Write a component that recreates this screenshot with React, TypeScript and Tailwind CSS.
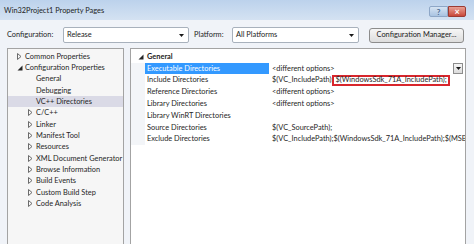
import React from 'react';

const font = { fontFamily: 'Lato, "Liberation Sans", sans-serif' };

type TreeItem = { label: string; level: 0 | 1; arrow: 'closed' | 'open' | 'none'; selected?: boolean };

const treeItems: TreeItem[] = [
  { label: 'Common Properties', level: 0, arrow: 'closed' },
  { label: 'Configuration Properties', level: 0, arrow: 'open' },
  { label: 'General', level: 1, arrow: 'none' },
  { label: 'Debugging', level: 1, arrow: 'none' },
  { label: 'VC++ Directories', level: 1, arrow: 'none', selected: true },
  { label: 'C/C++', level: 1, arrow: 'closed' },
  { label: 'Linker', level: 1, arrow: 'closed' },
  { label: 'Manifest Tool', level: 1, arrow: 'closed' },
  { label: 'Resources', level: 1, arrow: 'closed' },
  { label: 'XML Document Generator', level: 1, arrow: 'closed' },
  { label: 'Browse Information', level: 1, arrow: 'closed' },
  { label: 'Build Events', level: 1, arrow: 'closed' },
  { label: 'Custom Build Step', level: 1, arrow: 'closed' },
  { label: 'Code Analysis', level: 1, arrow: 'closed' },
];

const ClosedArrow = () => (
  <svg width="5" height="7" viewBox="0 0 5 7" className="shrink-0">
    <path d="M0.5 0.5 L4 3.5 L0.5 6.5 Z" fill="none" stroke="#6b6b6b" strokeWidth="1" />
  </svg>
);

const OpenArrow = () => (
  <svg width="6" height="6" viewBox="0 0 6 6" className="shrink-0">
    <path d="M5.5 0.5 L5.5 5.5 L0.5 5.5 Z" fill="#262626" />
  </svg>
);

const DropArrow = () => (
  <svg width="5" height="3" viewBox="0 0 5 3">
    <path d="M0 0 L5 0 L2.5 3 Z" fill="#1a1a1a" />
  </svg>
);

const Select = ({ value, width }: { value: string; width: string }) => (
  <div className={`${width} h-[16px] bg-white border border-[#a8b1bc] rounded-[2px] flex items-center justify-between pl-[3px] pr-[4px]`}>
    <span className="text-[7.4px] text-[#1b1b1b] leading-none">{value}</span>
    <DropArrow />
  </div>
);

type Prop = { name: string; value: string; selected?: boolean; boxed?: boolean };

const props: Prop[] = [
  { name: 'Executable Directories', value: '<different options>', selected: true },
  { name: 'Include Directories', value: '$(VC_IncludePath);', boxed: true },
  { name: 'Reference Directories', value: '<different options>' },
  { name: 'Library Directories', value: '<different options>' },
  { name: 'Library WinRT Directories', value: '' },
  { name: 'Source Directories', value: '$(VC_SourcePath);' },
  { name: 'Exclude Directories', value: '$(VC_IncludePath);$(WindowsSdk_71A_IncludePath);$(MSBuild_ExecutablePath)' },
];

export default function App() {
  return (
    <div className="w-[474px] h-[244px] overflow-hidden bg-[#dfe8f3] flex flex-col" style={font}>
      {/* Title bar */}
      <div className="h-[20px] shrink-0 bg-gradient-to-b from-[#bcd2ec] to-[#d4e2f2] flex items-start justify-between pl-[4px] pr-[8px]">
        <span className="text-[7.4px] text-[#1e1e1e] leading-none mt-[7px]">Win32Project1 Property Pages</span>
        <div className="flex mt-[6px]">
          <div className="w-[19px] h-[11px] rounded-l-[2px] bg-gradient-to-b from-[#d6e4f3] to-[#a9c3e1] border border-[#8ea7c7] flex items-center justify-center">
            <span className="text-[8px] leading-none text-[#4a6a92] font-bold">?</span>
          </div>
          <div className="w-[18px] h-[11px] rounded-r-[2px] bg-gradient-to-b from-[#e8a095] to-[#c8473a] border border-[#9c3b33] flex items-center justify-center">
            <span className="text-[9px] leading-none text-white font-bold">×</span>
          </div>
        </div>
      </div>

      {/* Body */}
      <div className="flex-1 bg-[#f0f3f8] flex flex-col pl-[7px] pr-[8px]">
        {/* Toolbar */}
        <div className="h-[25px] flex items-center pt-[5px]">
          <span className="text-[7.4px] text-[#1e1e1e] w-[56px]">Configuration:</span>
          <Select value="Release" width="w-[126px]" />
          <span className="text-[7.4px] text-[#1e1e1e] ml-[5px] w-[38px]">Platform:</span>
          <Select value="All Platforms" width="w-[127px]" />
          <div className="ml-[10px] w-[95px] h-[15px] rounded-[3px] border border-[#8c8c8c] bg-gradient-to-b from-[#f6f6f6] to-[#dddddd] flex items-center justify-center">
            <span className="text-[7.4px] text-[#1b1b1b] leading-none">Configuration Manager...</span>
          </div>
        </div>

        {/* Panels */}
        <div className="flex mt-[3px] gap-[6px] h-[197px]">
          {/* Tree */}
          <div className="w-[117px] border border-[#a3a3a3] bg-[#f6f6f6] pt-[1.7px] overflow-hidden">
            {treeItems.map((t) => (
              <div
                key={t.label}
                className={`h-[11.33px] flex items-center ${t.level === 0 ? 'pl-[9px]' : 'pl-[20px]'} ${t.selected ? 'bg-[#dadae6]' : ''}`}
              >
                <div className="w-[8px] shrink-0 flex items-center">
                  {t.arrow === 'closed' && <ClosedArrow />}
                  {t.arrow === 'open' && <OpenArrow />}
                </div>
                <span className="text-[7.4px] text-[#262626] leading-none whitespace-nowrap">{t.label}</span>
              </div>
            ))}
          </div>

          {/* Property grid */}
          <div className="flex-1 border border-[#a3a3a3] bg-white flex flex-col overflow-hidden pt-[1.5px]">
            <div className="h-[12px] flex items-center pl-[7px]">
              <OpenArrow />
              <span className="ml-[3px] text-[7.4px] font-bold text-[#1a1a1a] leading-none">General</span>
            </div>
            {props.map((p) => (
              <div key={p.name} className="h-[11.8px] flex items-stretch">
                <div className="w-[14px] shrink-0 bg-[#f3f5f8]" />
                <div className={`w-[124px] shrink-0 flex items-center pl-[2px] ${p.selected ? 'bg-[#3399ff]' : ''}`}>
                  <span className={`text-[7.4px] leading-none whitespace-nowrap ${p.selected ? 'text-white' : 'text-[#262626]'}`}>{p.name}</span>
                </div>
                <div className="flex-1 min-w-0 flex items-center pl-[3px] pr-[2px] overflow-hidden">
                  <span className="text-[7.4px] leading-none whitespace-nowrap text-[#262626]">{p.value}</span>
                  {p.boxed && (
                    <span className="border-2 border-[#d8262c] h-[11px] flex items-center px-[1px] -ml-[1px]">
                      <span className="text-[7.4px] leading-none whitespace-nowrap text-[#262626]">$(WindowsSdk_71A_IncludePath);</span>
                    </span>
                  )}
                  {p.selected && (
                    <div className="ml-auto w-[10px] h-[11px] border border-[#8d8d8d] bg-gradient-to-b from-[#f6f6f6] to-[#dcdcdc] flex items-center justify-center">
                      <DropArrow />
                    </div>
                  )}
                </div>
              </div>
            ))}
          </div>
        </div>
      </div>
    </div>
  );
}
